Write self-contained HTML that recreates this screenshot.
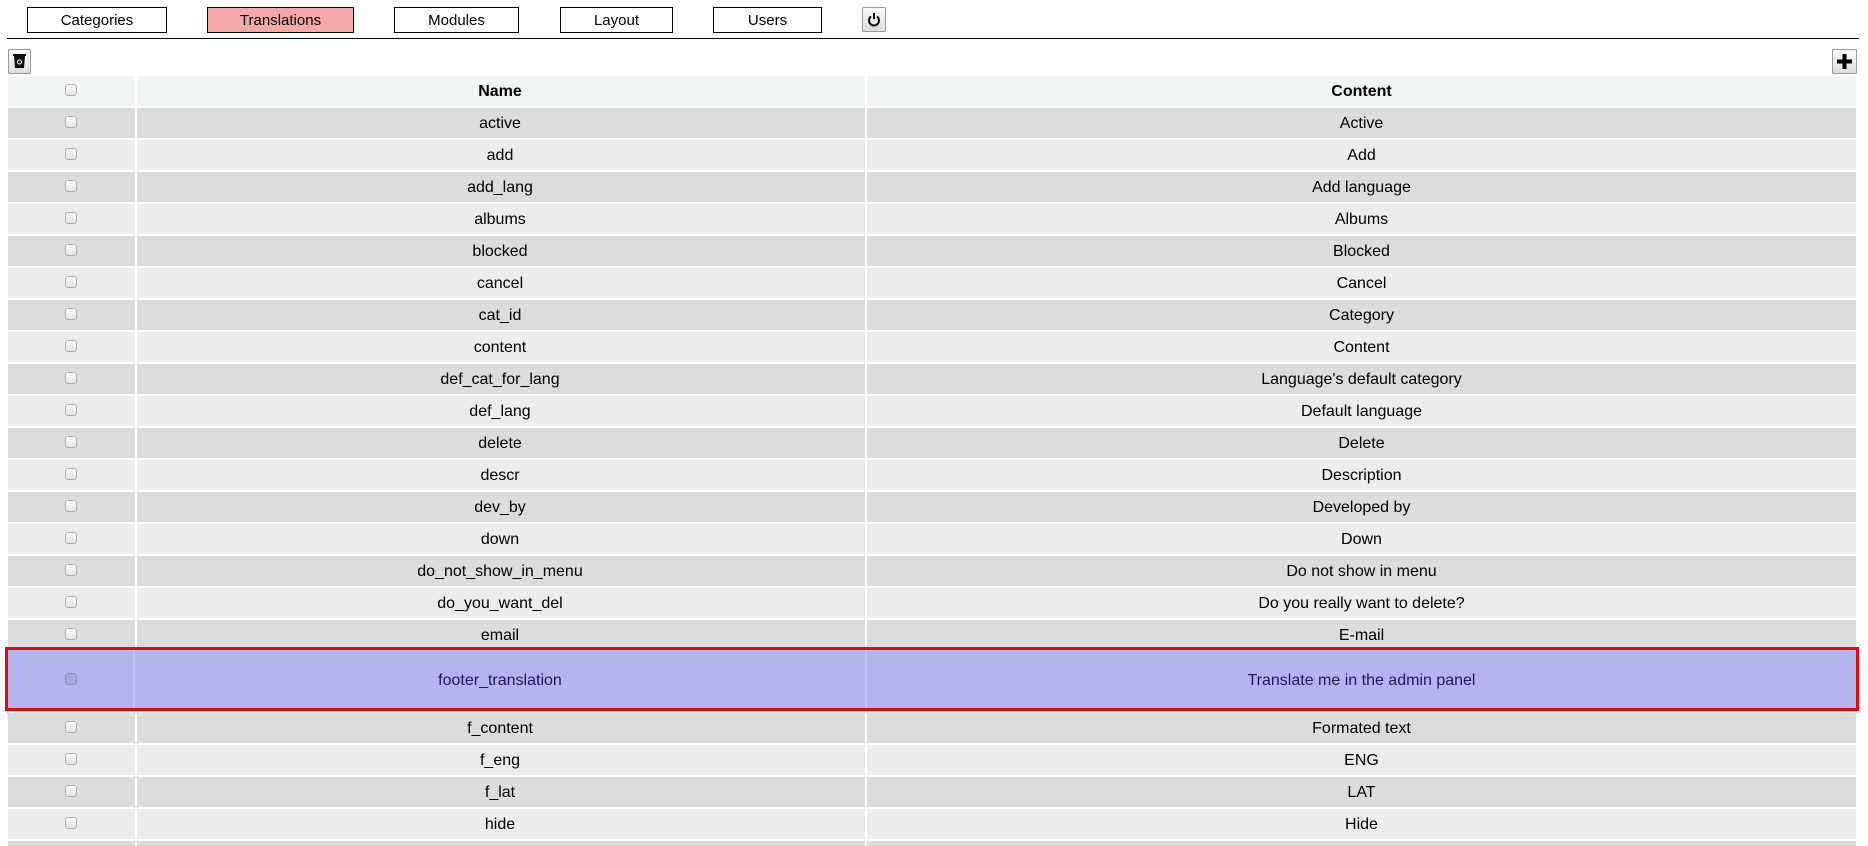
<!DOCTYPE html>
<html style="height:846px;overflow:hidden"><head><style>
html,body{margin:0;padding:0}
body{width:1868px;height:846px;overflow:hidden;background:#fff;font-family:"Liberation Sans",sans-serif;font-size:16px;color:#000;position:relative}
.b{position:absolute;top:7px;height:24px;border:1px solid #000;background:#fff;text-align:center;line-height:26px;font-size:15px}
.ib{position:absolute;border:1px solid #999;border-radius:2px;background:linear-gradient(#fafafa,#ddd);box-sizing:border-box}
.r{position:absolute;left:8px;width:1848px;height:30px;line-height:32px}
.r div{position:absolute;top:0;height:100%;text-align:center}
.c1{left:0;width:125px}.c2{left:127px;width:730px}.c3{left:859px;width:989px}
.cb{display:inline-block;width:10px;height:10px;border:1px solid #b0b0b0;border-radius:3px;background:linear-gradient(#fff,#e0e0e0);vertical-align:middle;margin-top:-3px}
.o{background:#dcdcdc}.e{background:#ececec}
</style></head><body>
<div class="b" style="left:27px;width:138px">Categories</div>
<div class="b" style="left:207px;width:145px;background:#f4a9a8">Translations</div>
<div class="b" style="left:394px;width:123px">Modules</div>
<div class="b" style="left:560px;width:111px">Layout</div>
<div class="b" style="left:713px;width:107px">Users</div>
<div class="ib" style="left:862px;top:7px;width:24px;height:25px"><svg width="22" height="23" viewBox="0 0 22 23"><path d="M8 8.5a5 5 0 1 0 6 0" fill="none" stroke="#000" stroke-width="2"/><path d="M11 5v6" stroke="#000" stroke-width="2"/></svg></div>
<div style="position:absolute;left:7px;top:38px;width:1852px;height:1px;background:#000"></div>
<div class="ib" style="left:8px;top:49px;width:23px;height:25px"><svg width="21" height="23" viewBox="0 0 21 23"><path d="M5 6h11l-1 12H6z" fill="#111"/><rect x="4" y="4" width="13" height="2" fill="#111"/><circle cx="10.5" cy="12" r="2" fill="none" stroke="#fff" stroke-width="1"/></svg></div>
<div class="ib" style="left:1832px;top:49px;width:25px;height:25px"><svg width="23" height="23" viewBox="0 0 23 23"><path d="M9.5 4h4v5.5H19v4h-5.5V19h-4v-5.5H4v-4h5.5z" fill="#000"/></svg></div>
<div class="r" style="top:76px;background:#f2f5f5;font-weight:bold"><div class="c1"><span class="cb"></span></div><div class="c2">Name</div><div class="c3">Content</div></div>
<div style="position:absolute;left:135px;top:76px;width:2px;height:770px;background:#fff;z-index:2"></div>
<div style="position:absolute;left:865px;top:76px;width:2px;height:770px;background:#fff;z-index:2"></div>
<div class="r o" style="top:108px"><div class="c1"><span class="cb"></span></div><div class="c2">active</div><div class="c3">Active</div></div>
<div class="r e" style="top:140px"><div class="c1"><span class="cb"></span></div><div class="c2">add</div><div class="c3">Add</div></div>
<div class="r o" style="top:172px"><div class="c1"><span class="cb"></span></div><div class="c2">add_lang</div><div class="c3">Add language</div></div>
<div class="r e" style="top:204px"><div class="c1"><span class="cb"></span></div><div class="c2">albums</div><div class="c3">Albums</div></div>
<div class="r o" style="top:236px"><div class="c1"><span class="cb"></span></div><div class="c2">blocked</div><div class="c3">Blocked</div></div>
<div class="r e" style="top:268px"><div class="c1"><span class="cb"></span></div><div class="c2">cancel</div><div class="c3">Cancel</div></div>
<div class="r o" style="top:300px"><div class="c1"><span class="cb"></span></div><div class="c2">cat_id</div><div class="c3">Category</div></div>
<div class="r e" style="top:332px"><div class="c1"><span class="cb"></span></div><div class="c2">content</div><div class="c3">Content</div></div>
<div class="r o" style="top:364px"><div class="c1"><span class="cb"></span></div><div class="c2">def_cat_for_lang</div><div class="c3">Language's default category</div></div>
<div class="r e" style="top:396px"><div class="c1"><span class="cb"></span></div><div class="c2">def_lang</div><div class="c3">Default language</div></div>
<div class="r o" style="top:428px"><div class="c1"><span class="cb"></span></div><div class="c2">delete</div><div class="c3">Delete</div></div>
<div class="r e" style="top:460px"><div class="c1"><span class="cb"></span></div><div class="c2">descr</div><div class="c3">Description</div></div>
<div class="r o" style="top:492px"><div class="c1"><span class="cb"></span></div><div class="c2">dev_by</div><div class="c3">Developed by</div></div>
<div class="r e" style="top:524px"><div class="c1"><span class="cb"></span></div><div class="c2">down</div><div class="c3">Down</div></div>
<div class="r o" style="top:556px"><div class="c1"><span class="cb"></span></div><div class="c2">do_not_show_in_menu</div><div class="c3">Do not show in menu</div></div>
<div class="r e" style="top:588px"><div class="c1"><span class="cb"></span></div><div class="c2">do_you_want_del</div><div class="c3">Do you really want to delete?</div></div>
<div class="r o" style="top:620px"><div class="c1"><span class="cb"></span></div><div class="c2">email</div><div class="c3">E-mail</div></div>
<div class="r" style="top:650px;height:58px;line-height:62px;background:#b4b4f0;color:#1a1a5a;z-index:3"><div class="c1"><span class="cb" style="background:#a8a8dc;border-color:#9090c0"></span></div><div class="c2" style="border-left:2px solid #c4c4f4;left:125px">footer_translation</div><div class="c3" style="border-left:2px solid #c4c4f4;left:857px">Translate me in the admin panel</div></div>
<div style="position:absolute;left:5px;top:647px;width:1848px;height:58px;border:3px solid #e6060a;z-index:4"></div>
<div class="r o" style="top:713px"><div class="c1"><span class="cb"></span></div><div class="c2">f_content</div><div class="c3">Formated text</div></div>
<div class="r e" style="top:745px"><div class="c1"><span class="cb"></span></div><div class="c2">f_eng</div><div class="c3">ENG</div></div>
<div class="r o" style="top:777px"><div class="c1"><span class="cb"></span></div><div class="c2">f_lat</div><div class="c3">LAT</div></div>
<div class="r e" style="top:809px"><div class="c1"><span class="cb"></span></div><div class="c2">hide</div><div class="c3">Hide</div></div>
<div class="r o" style="top:841px;height:5px"></div>
</body></html>
